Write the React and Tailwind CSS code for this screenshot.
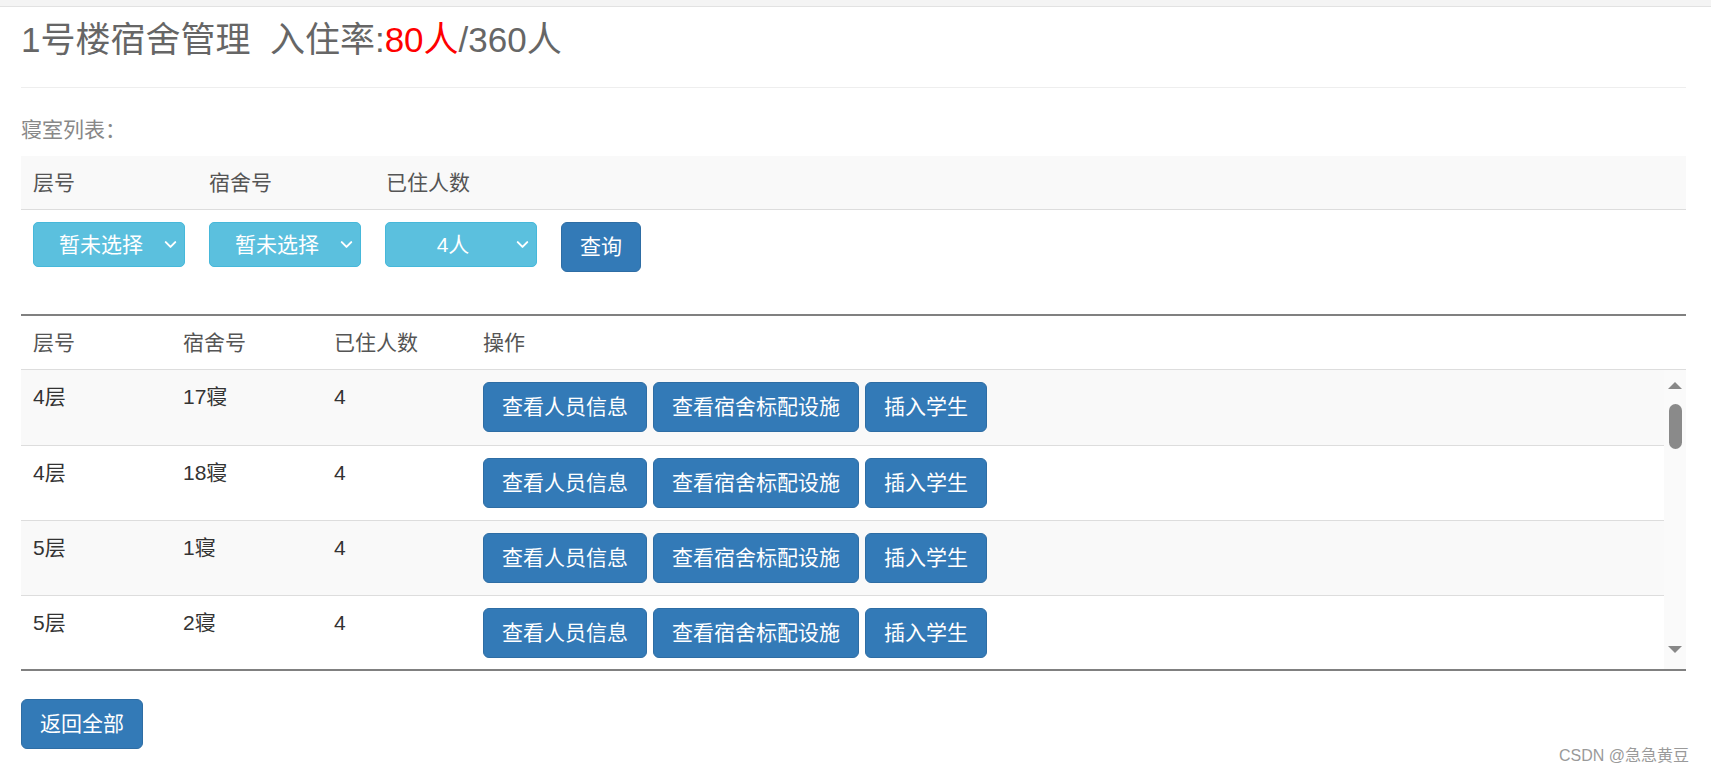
import React from "react";
import { ChevronDown } from "lucide-react";

const rooms = [
  { floor: "4层", room: "17寝", count: 4 },
  { floor: "4层", room: "18寝", count: 4 },
  { floor: "5层", room: "1寝", count: 4 },
  { floor: "5层", room: "2寝", count: 4 },
];

const Btn = ({ children, className = "" }) => (
  <button
    className={`h-[50px] px-[18px] rounded-[6px] border border-[#2e6da4] bg-[#337ab7] text-white text-[21px] leading-[30px] whitespace-nowrap ${className}`}
  >
    {children}
  </button>
);

const SelectBox = ({ label }) => (
  <div className="relative w-[152px] h-[45px] rounded-[5px] border border-[#46b8da] bg-[#5bc0de] text-white text-[21px] leading-[43px] pl-3 pr-7 text-center">
    {label}
    <ChevronDown
      size={19}
      strokeWidth={2.5}
      className="absolute right-[4px] top-[12px] text-white"
    />
  </div>
);

const App = () => {
  return (
    <div
      className="relative h-[775px] bg-white text-[#333] overflow-hidden"
      style={{ fontFamily: '"Liberation Sans", "Noto Sans CJK SC", sans-serif' }}
    >
      <div className="h-[7px] bg-[#f4f4f4] border-b border-[#e2e2e2]" />
      <div className="pl-[21px] pr-[25px]">
        <h3 className="mt-[13px] text-[35px] leading-[40px] text-[#666]">
          1号楼宿舍管理&nbsp; 入住率:<span className="text-[#ff0000]">80人</span>
          /360人
        </h3>
        <div className="mt-[27px] h-px bg-[#eee]" />
        <p className="mt-[27px] text-[21px] leading-[30px] text-[#888]">
          寝室列表：
        </p>

        {/* filter */}
        <div className="mt-[11px]">
          <div className="flex h-[54px] items-center bg-[#f9f9f9] border-b border-[#ddd] text-[21px] text-[#555]">
            <div className="w-[176px] px-3">层号</div>
            <div className="w-[177px] px-3">宿舍号</div>
            <div className="w-[176px] px-3">已住人数</div>
          </div>
          <div className="flex items-start gap-[24px] px-3 pt-3 pb-3">
            <SelectBox label="暂未选择" />
            <SelectBox label="暂未选择" />
            <SelectBox label="4人" />
            <Btn>查询</Btn>
          </div>
        </div>

        {/* dorm table */}
        <div className="mt-[30px] border-t-2 border-[#808080]">
          <div className="flex h-[54px] items-center border-b border-[#ddd] text-[21px] text-[#555]">
            <div className="w-[150px] px-3">层号</div>
            <div className="w-[151px] px-3">宿舍号</div>
            <div className="w-[149px] px-3">已住人数</div>
            <div className="px-3">操作</div>
          </div>
          <div className="flex h-[299px]">
            <div className="flex-1 overflow-hidden">
              {rooms.map((r, i) => (
                <div
                  key={i}
                  className={`flex h-[75px] text-[21px] leading-[30px] ${
                    i > 0 ? "border-t border-[#ddd]" : ""
                  } ${i % 2 === 0 ? "bg-[#f9f9f9]" : "bg-white"}`}
                >
                  <div className="w-[150px] px-3 pt-3">{r.floor}</div>
                  <div className="w-[151px] px-3 pt-3">{r.room}</div>
                  <div className="w-[149px] px-3 pt-3">{r.count}</div>
                  <div className="flex gap-[6px] px-3 pt-3">
                    <Btn>查看人员信息</Btn>
                    <Btn>查看宿舍标配设施</Btn>
                    <Btn>插入学生</Btn>
                  </div>
                </div>
              ))}
            </div>
            <div className="flex w-[22px] flex-col items-center bg-[#fafafa] pt-[12px] pb-[16px]">
              <div className="h-0 w-0 border-l-[7px] border-r-[7px] border-b-[7px] border-l-transparent border-r-transparent border-b-[#888]" />
              <div className="mt-[15px] h-[45px] w-[13px] rounded-full bg-[#8a8a8a]" />
              <div className="flex-1" />
              <div className="h-0 w-0 border-l-[7px] border-r-[7px] border-t-[7px] border-l-transparent border-r-transparent border-t-[#888]" />
            </div>
          </div>
          <div className="h-[2px] bg-[#808080]" />
        </div>

        <Btn className="mt-[28px] w-[122px]">返回全部</Btn>
      </div>

      <div className="absolute left-[1559px] top-[745px] text-[16px] leading-[22px] text-[#9a9a9a]">
        CSDN @急急黄豆
      </div>
    </div>
  );
};

export default App;
